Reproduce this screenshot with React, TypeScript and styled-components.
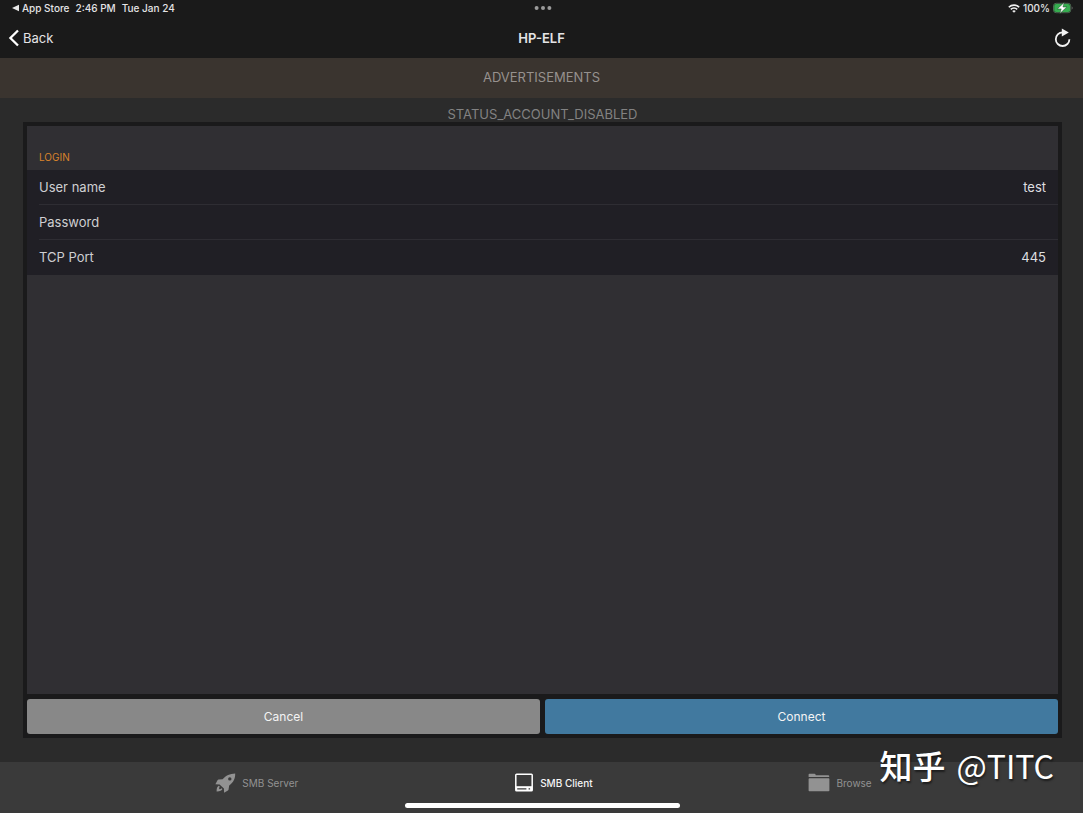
import React, { useState } from "react";
import styled, { createGlobalStyle } from "styled-components";

const GlobalStyle = createGlobalStyle`
  *, *::before, *::after { box-sizing: border-box; }
  body {
    margin: 0;
    background: #2b2b2b;
    color: #e4e4e6;
    font-family: Inter, "Liberation Sans", sans-serif;
  }
  button, input { font: inherit; color: inherit; }
`;

const Screen = styled.div`
  position: relative;
  display: flex;
  flex-direction: column;
  min-height: 100vh;
`;

const StatusBar = styled.div`
  display: grid;
  grid-template-columns: 1fr auto 1fr;
  align-items: center;
  height: 18px;
  padding: 0 10px 2px 12px;
  background: #1a1a1a;
  font-size: 10px;
  line-height: 16px;
  font-weight: 500;
`;

const StatusGroup = styled.div<{ $end?: boolean }>`
  display: flex;
  align-items: center;
  justify-content: ${(p) => (p.$end ? "flex-end" : "flex-start")};
  gap: ${(p) => (p.$end ? "3px" : "6px")};
`;

const BackToApp = styled.a`
  display: flex;
  align-items: center;
  gap: 3px;
  color: inherit;
  text-decoration: none;
`;

const NavBar = styled.header`
  display: grid;
  grid-template-columns: 1fr auto 1fr;
  align-items: center;
  height: 40px;
  padding: 0 8px;
  background: #1a1a1a;
`;

const NavButton = styled.button<{ $end?: boolean }>`
  display: flex;
  align-items: center;
  gap: 3px;
  justify-self: ${(p) => (p.$end ? "end" : "start")};
  padding: ${(p) => (p.$end ? "0 4px" : "0")};
  border: 0;
  background: none;
  font-size: 13px;
  line-height: 20px;
`;

const NavTitle = styled.h1`
  margin: 0;
  font-size: 13px;
  line-height: 20px;
  font-weight: 600;
`;

const AdBanner = styled.div`
  height: 40px;
  background: #3a342f;
  color: #96918e;
  font-size: 13px;
  line-height: 38px;
  text-align: center;
`;

const Main = styled.main`
  flex: 1;
  display: flex;
  flex-direction: column;
  padding: 6px 21px 24px 23px;
`;

const Message = styled.p`
  margin: 0;
  height: 18px;
  color: #828282;
  font-size: 13px;
  line-height: 20px;
  text-align: center;
`;

const LoginForm = styled.form`
  flex: 1;
  display: flex;
  flex-direction: column;
  gap: 5px;
  padding: 4px;
  background: #1a1a1b;
`;

const FormBody = styled.div`
  flex: 1;
  background: #302f33;
`;

const SectionTitle = styled.h2`
  margin: 0;
  padding: 21px 12px 3px;
  height: 44px;
  color: #d9832b;
  font-size: 10px;
  line-height: 20px;
  font-weight: 400;
`;

const Fields = styled.div`
  background: #201f25;
`;

const Field = styled.label`
  display: flex;
  align-items: center;
  height: 35px;
  margin-left: 12px;
  padding-right: 12px;
  border-bottom: 1px solid #2e2d33;
  color: #cfcfd2;
  font-size: 13px;
  line-height: 20px;

  &:last-child {
    border-bottom-color: transparent;
  }
`;

const FieldInput = styled.input`
  flex: 1;
  min-width: 0;
  padding: 0;
  border: 0;
  outline: 0;
  background: none;
  color: #dedee0;
  text-align: right;
`;

const Actions = styled.div`
  display: grid;
  grid-template-columns: 1fr 1fr;
  gap: 5px;
`;

const ActionButton = styled.button<{ $primary?: boolean }>`
  height: 35px;
  padding: 0;
  border: 0;
  border-radius: 3px;
  background: ${(p) => (p.$primary ? "#41799f" : "#888888")};
  color: #f4f4f4;
  font-size: 12px;
`;

const TabBar = styled.nav`
  display: flex;
  justify-content: center;
  gap: 20%;
  height: 51px;
  padding: 0 0 10px 4px;
  background: #3a3a3a;
`;

const Tab = styled.a<{ $active?: boolean }>`
  display: flex;
  align-items: center;
  gap: 6px;
  color: ${(p) => (p.$active ? "#f5f5f5" : "#929292")};
  font-size: 10px;
  line-height: 16px;
  font-weight: ${(p) => (p.$active ? 500 : 400)};
  white-space: nowrap;
  text-decoration: none;
`;

const HomeIndicator = styled.div`
  position: absolute;
  bottom: 5px;
  left: 50%;
  width: 275px;
  height: 5px;
  margin-left: -137px;
  border-radius: 3px;
  background: #ffffff;
`;

const Watermark = styled.div`
  position: absolute;
  right: 29px;
  bottom: 24px;
  display: flex;
  align-items: baseline;
  gap: 11px;
  color: #ffffff;
  font-family: "Noto Sans CJK SC", sans-serif;
  font-size: 32px;
  line-height: 48px;
  text-shadow: 1px 2px 2px rgba(0, 0, 0, 0.5);
  pointer-events: none;
`;

const WatermarkName = styled.span`
  font-size: 33px;
  font-weight: 500;
`;

const BackTriangle = () => (
  <svg width="7" height="8" viewBox="0 0 7 8" aria-hidden="true">
    <path d="M7 0.8v6.4L0 4z" fill="#e8e8e8" />
  </svg>
);

const MoreDots = () => (
  <svg width="18" height="6" viewBox="0 0 18 6" aria-hidden="true">
    <g fill="#9b9b9b">
      <circle cx="2.6" cy="3" r="2" />
      <circle cx="9" cy="3" r="2" />
      <circle cx="15.4" cy="3" r="2" />
    </g>
  </svg>
);

const WifiIcon = () => (
  <svg width="12" height="9" viewBox="0 0 12 9" aria-hidden="true">
    <g fill="none" stroke="#f0f0f0" strokeWidth="1.6">
      <path d="M0.8 3.3a7.4 7.4 0 0 1 10.4 0" />
      <path d="M2.8 5.4a4.5 4.5 0 0 1 6.4 0" />
    </g>
    <path d="M6 8.8L4.2 7a2.6 2.6 0 0 1 3.6 0z" fill="#f0f0f0" />
  </svg>
);

const BatteryIcon = () => (
  <svg width="20" height="12" viewBox="0 0 20 12" aria-hidden="true">
    <rect x="0.5" y="1.3" width="17.2" height="9.4" rx="2.6" fill="none" stroke="#4a6b50" />
    <rect x="1.2" y="2" width="15.8" height="8" rx="1.8" fill="#36ad50" />
    <path d="M18.6 4.5v3c.8-.3 1.2-.8 1.2-1.5s-.4-1.2-1.2-1.5z" fill="#5a5a5a" />
    <path
      d="M11.2 0.4L4.4 6.9h3.8L6.8 11.6l7-6.6H10z"
      fill="#ffffff"
      stroke="#1f4a2a"
      strokeWidth="0.5"
    />
  </svg>
);

const ChevronLeft = () => (
  <svg width="12" height="18" viewBox="0 0 12 18" aria-hidden="true">
    <path d="M10 1.5L2.4 9l7.6 7.5" fill="none" stroke="#ffffff" strokeWidth="2.3" />
  </svg>
);

const ReloadIcon = () => (
  <svg width="17" height="20" viewBox="0 0 17 20" aria-hidden="true">
    <path d="M8.6 4.4A6.8 6.8 0 1 0 15.4 11.2" fill="none" stroke="#f2f2f2" strokeWidth="1.8" />
    <path d="M7.8 0.4L14.8 4.6L7.8 8.4z" fill="#f2f2f2" />
  </svg>
);

const RocketIcon = () => (
  <svg width="21" height="20" viewBox="0 0 21 20" aria-hidden="true">
    <path
      fillRule="evenodd"
      fill="#929292"
      d="M20.2 0.4C14.8 0.6 11 2.3 7.6 6.2L3.6 6.6C3.1 6.7 2.8 6.9 2.5 7.3L0.4 11.2L4.6 11.4L8.9 15.6L9.1 19.7L12.9 17.4C13.4 17.1 13.6 16.8 13.6 16.3L14.2 12.4C18.4 9.1 20.3 5.8 20.2 0.4zM14.8 4.2a1.7 1.7 0 1 1 0 3.4a1.7 1.7 0 1 1 0-3.4z"
    />
    <path
      fill="#929292"
      d="M3.9 12.7C2.4 13.3 1.5 15 1.6 18.5C4.7 18.6 6.9 17.8 7.4 16.1L6.4 15.2C5.8 16 5.1 16.3 4.2 16.1C3.9 15.2 4.1 14.4 4.8 13.7z"
    />
  </svg>
);

const DriveIcon = () => (
  <svg width="20" height="20" viewBox="0 0 20 20" aria-hidden="true">
    <rect x="1.8" y="1.3" width="16.4" height="16.4" rx="0.8" fill="none" stroke="#ffffff" strokeWidth="1.5" />
    <path d="M1.8 13.2h16.4v4.5H1.8z" fill="#ffffff" />
    <path d="M3.2 15.8h9.2M14.6 15.8h1.5" stroke="#3a3a3a" strokeWidth="1.3" />
  </svg>
);

const FolderIcon = () => (
  <svg width="22" height="20" viewBox="0 0 22 20" aria-hidden="true">
    <path d="M0.6 3.4V1.6c0-.5.3-.8.8-.8h5.2c.4 0 .7.2.8.5l.4.9h12.5c.6 0 .9.3.9.8V4H0.6z" fill="#929292" />
    <rect x="0.6" y="5.2" width="20.8" height="13" rx="0.8" fill="#929292" />
  </svg>
);

const fields = [
  { name: "user", label: "User name", type: "text", initial: "test" },
  { name: "password", label: "Password", type: "password", initial: "" },
  { name: "port", label: "TCP Port", type: "text", initial: "445" },
];

export default function App() {
  const [values, setValues] = useState<Record<string, string>>(
    Object.fromEntries(fields.map((f) => [f.name, f.initial])),
  );

  return (
    <>
      <GlobalStyle />
      <Screen>
        <StatusBar>
          <StatusGroup>
            <BackToApp href="#app-store">
              <BackTriangle />
              App Store
            </BackToApp>
            <span>2:46 PM</span>
            <span>Tue Jan 24</span>
          </StatusGroup>
          <MoreDots />
          <StatusGroup $end>
            <WifiIcon />
            <span>100%</span>
            <BatteryIcon />
          </StatusGroup>
        </StatusBar>
        <NavBar>
          <NavButton type="button">
            <ChevronLeft />
            Back
          </NavButton>
          <NavTitle>HP-ELF</NavTitle>
          <NavButton type="button" $end aria-label="Reload">
            <ReloadIcon />
          </NavButton>
        </NavBar>
        <AdBanner>ADVERTISEMENTS</AdBanner>
        <Main>
          <Message>STATUS_ACCOUNT_DISABLED</Message>
          <LoginForm onSubmit={(e) => e.preventDefault()}>
            <FormBody>
              <SectionTitle>LOGIN</SectionTitle>
              <Fields>
                {fields.map((f) => (
                  <Field key={f.name}>
                    {f.label}
                    <FieldInput
                      type={f.type}
                      name={f.name}
                      value={values[f.name]}
                      onChange={(e) => setValues({ ...values, [f.name]: e.target.value })}
                    />
                  </Field>
                ))}
              </Fields>
            </FormBody>
            <Actions>
              <ActionButton type="button">Cancel</ActionButton>
              <ActionButton type="submit" $primary>
                Connect
              </ActionButton>
            </Actions>
          </LoginForm>
        </Main>
        <TabBar>
          <Tab href="#server">
            <RocketIcon />
            SMB Server
          </Tab>
          <Tab href="#client" $active aria-current="page">
            <DriveIcon />
            SMB Client
          </Tab>
          <Tab href="#browse">
            <FolderIcon />
            Browse
          </Tab>
        </TabBar>
        <HomeIndicator />
        <Watermark>
          <WatermarkName>知乎</WatermarkName>
          <span>@TITC</span>
        </Watermark>
      </Screen>
    </>
  );
}
